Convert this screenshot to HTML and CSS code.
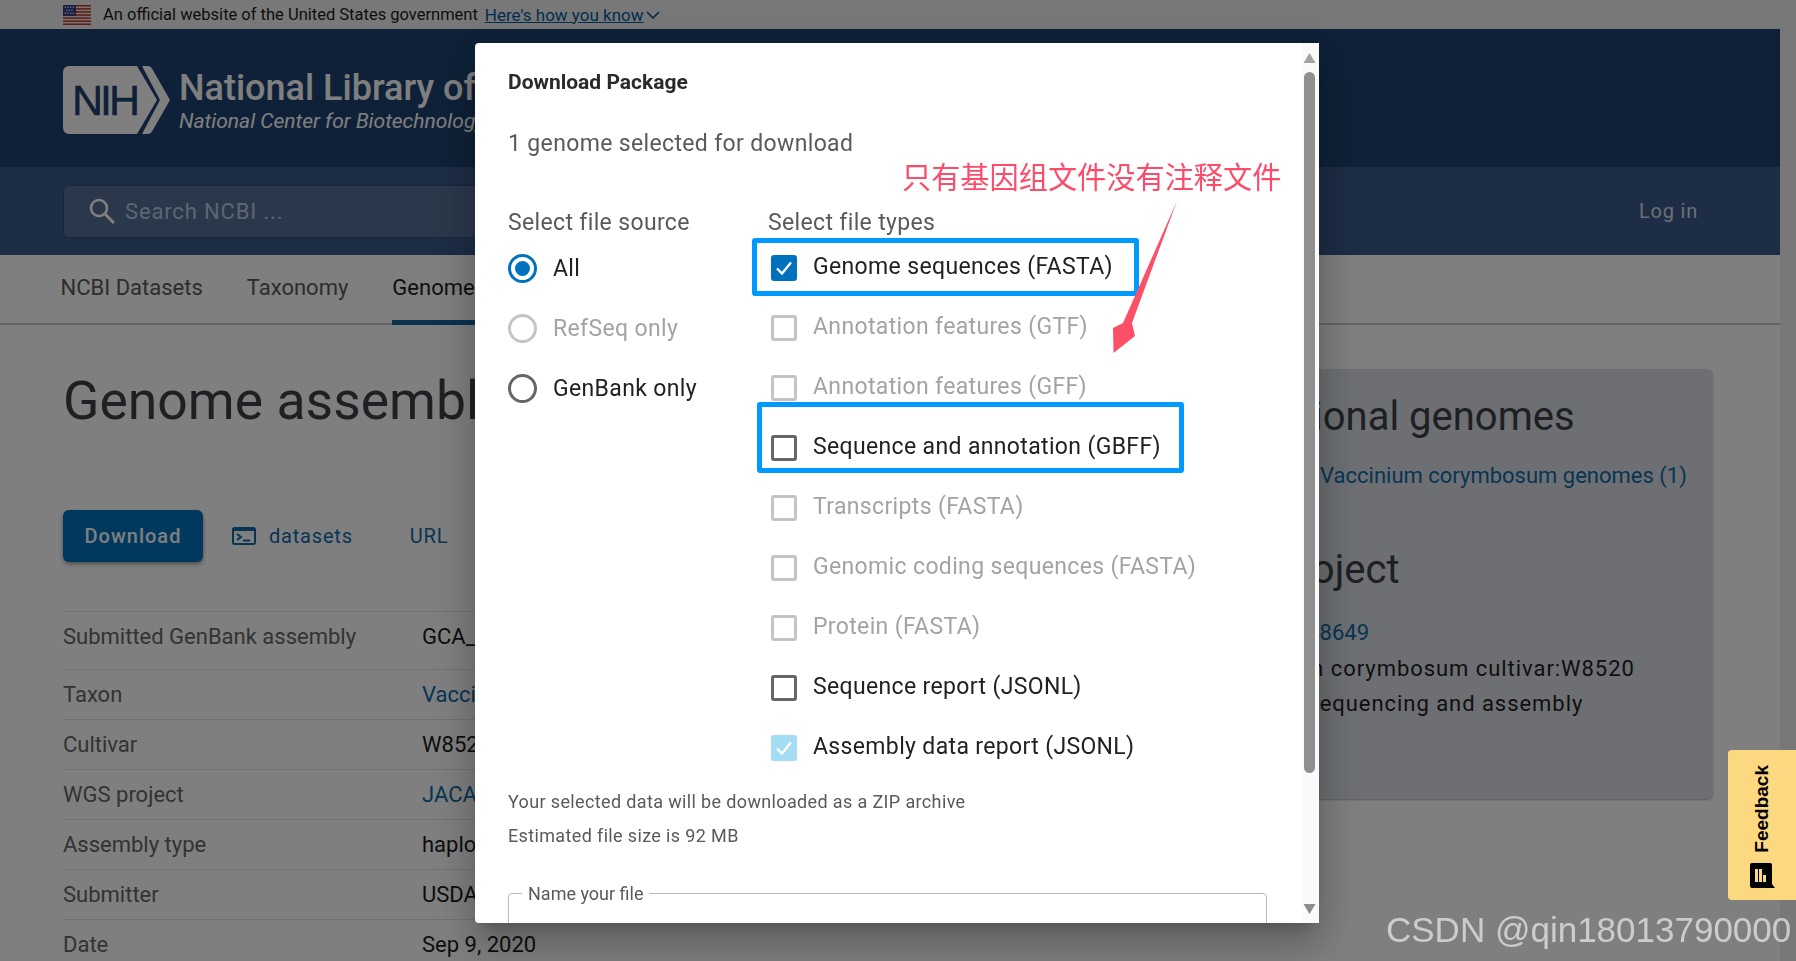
FILE: index.html
```html
<!DOCTYPE html>
<html lang="en">
<head>
<meta charset="utf-8">
<title>Genome assembly - NCBI</title>
<link rel="stylesheet" href="styles.css">
</head>
<body>
<div class="page">
  <div class="gov-banner">
    <svg class="flag" viewBox="0 0 26 20" preserveAspectRatio="none"><rect width="26" height="20" fill="#ececec"/><g fill="#c0392b"><rect width="26" height="1.540"/><rect y="3.080" width="26" height="1.540"/><rect y="6.160" width="26" height="1.540"/><rect y="9.240" width="26" height="1.540"/><rect y="12.320" width="26" height="1.540"/><rect y="15.400" width="26" height="1.540"/><rect y="18.460" width="26" height="1.540"/></g><rect width="12" height="10.800" fill="#2f3a88"/><g fill="#f0f0f0"><rect x="1.500" y="1.500" width="1.300" height="1.300"/><rect x="4" y="1.500" width="1.300" height="1.300"/><rect x="6.500" y="1.500" width="1.300" height="1.300"/><rect x="9" y="1.500" width="1.300" height="1.300"/><rect x="2.700" y="4.500" width="1.300" height="1.300"/><rect x="5.200" y="4.500" width="1.300" height="1.300"/><rect x="7.700" y="4.500" width="1.300" height="1.300"/><rect x="1.500" y="7.500" width="1.300" height="1.300"/><rect x="4" y="7.500" width="1.300" height="1.300"/><rect x="6.500" y="7.500" width="1.300" height="1.300"/><rect x="9" y="7.500" width="1.300" height="1.300"/></g></svg>
    <span class="gov-text">An official website of the United States government</span>
    <a class="gov-link">Here's how you know</a>
    <svg class="gov-chev" viewBox="0 0 14 8"><path d="M1 1l6 6 6-6" fill="none" stroke="#0b4f86" stroke-width="1.600"/></svg>
  </div>
  <header class="masthead">
    <svg class="nih-logo" viewBox="0 0 107 68">
      <path d="M6 0H74L94 34 74 68H6a6 6 0 0 1-6-6V6a6 6 0 0 1 6-6z" fill="#fff"/>
      <path d="M79 0h6a5 5 0 0 1 4 2.500L107 34 89 65.500A5 5 0 0 1 85 68h-6L97 34z" fill="#fff"/>
      <text x="9" y="49" class="nih-text">NIH</text>
    </svg>
    <div class="masthead-title">
      <div class="nlm">National Library of Medicine</div>
      <div class="ncbi">National Center for Biotechnology Information</div>
    </div>
  </header>
  <div class="searchband">
    <div class="searchbox">
      <svg class="search-icon" viewBox="0 0 26 26"><circle cx="10" cy="10" r="8" fill="none" stroke="#fff" stroke-width="2.600"/><path d="M16 16l9 9" stroke="#fff" stroke-width="3"/></svg>
      <span class="placeholder">Search NCBI ...</span>
    </div>
    <a class="login">Log in</a>
  </div>
  <nav class="tabs">
    <a class="tab">NCBI Datasets</a>
    <a class="tab">Taxonomy</a>
    <a class="tab tab-active">Genome</a>
  </nav>
  <main class="content">
    <section class="main-col">
      <h1 class="title">Genome assembly ASM1444434v1</h1>
      <div class="actions">
        <button class="btn-download">Download</button>
        <a class="action-link">
          <svg class="term-icon" viewBox="0 0 24 18"><rect x="1" y="1" width="22" height="16" rx="1.500" fill="none" stroke="#0f6aa8" stroke-width="2"/><rect x="1" y="1" width="22" height="3" fill="#0f6aa8"/><path d="M5 7l4 3-4 3" fill="none" stroke="#0f6aa8" stroke-width="2"/><path d="M11 13.500h7" stroke="#0f6aa8" stroke-width="2"/></svg>
          datasets</a>
        <a class="action-link action-url">URL</a>
      </div>
      <dl class="facts">
        <div class="fact fact-first"><dt>Submitted GenBank assembly</dt><dd>GCA_014444345.1</dd></div>
        <div class="fact"><dt>Taxon</dt><dd class="lnk">Vaccinium corymbosum (highbush blueberry)</dd></div>
        <div class="fact"><dt>Cultivar</dt><dd>W8520</dd></div>
        <div class="fact"><dt>WGS project</dt><dd class="lnk">JACAEA01</dd></div>
        <div class="fact"><dt>Assembly type</dt><dd>haploid</dd></div>
        <div class="fact"><dt>Submitter</dt><dd>USDA ARS</dd></div>
        <div class="fact"><dt>Date</dt><dd>Sep 9, 2020</dd></div>
      </dl>
    </section>
    <aside class="card">
      <h2 class="card-h">Additional genomes</h2>
      <a class="card-link card-all">See more Vaccinium corymbosum genomes (1)</a>
      <h2 class="card-h card-h2">BioProject</h2>
      <a class="card-link card-num">PRJNA648649</a>
      <p class="card-p">Vaccinium corymbosum cultivar:W8520</p>
      <p class="card-p">Genome sequencing and assembly</p>
    </aside>
  </main>
  <div class="scroll-strip"></div>
</div>

<div class="overlay"></div>

<a class="feedback">
  <svg class="fb-icon" viewBox="0 0 25 25"><path d="M2 0h18a2 2 0 0 1 2 2v19l3 4H2a2 2 0 0 1-2-2V2a2 2 0 0 1 2-2z" fill="#000"/><g fill="#fcd881"><rect x="5" y="6" width="3" height="13"/><rect x="9" y="6" width="3" height="13"/><rect x="13" y="12" width="3" height="7"/></g></svg>
  <span class="fb-text">Feedback</span>
</a>

<div class="dialog">
  <div class="dialog-body">
    <h2 class="d-title">Download Package</h2>
    <p class="d-sub">1 genome selected for download</p>
    <div class="d-cols">
      <div class="d-source">
        <div class="d-label">Select file source</div>
        <div class="opt"><span class="radio radio-on"></span>All</div>
        <div class="opt opt-off"><span class="radio"></span>RefSeq only</div>
        <div class="opt"><span class="radio radio-dark"></span>GenBank only</div>
      </div>
      <div class="d-types">
        <div class="d-label">Select file types</div>
        <div class="chk"><span class="box box-on"><svg viewBox="0 0 26 26"><path d="M6 13.500l5 5 9-11" fill="none" stroke="#fff" stroke-width="2.400"/></svg></span>Genome sequences (FASTA)</div>
        <div class="chk chk-off"><span class="box"></span>Annotation features (GTF)</div>
        <div class="chk chk-off"><span class="box"></span>Annotation features (GFF)</div>
        <div class="chk"><span class="box box-dark"></span>Sequence and annotation (GBFF)</div>
        <div class="chk chk-off"><span class="box"></span>Transcripts (FASTA)</div>
        <div class="chk chk-off"><span class="box"></span>Genomic coding sequences (FASTA)</div>
        <div class="chk chk-off"><span class="box"></span>Protein (FASTA)</div>
        <div class="chk"><span class="box box-dark"></span>Sequence report (JSONL)</div>
        <div class="chk"><span class="box box-light"><svg viewBox="0 0 26 26"><path d="M6 13.500l5 5 9-11" fill="none" stroke="#fff" stroke-width="2.400"/></svg></span>Assembly data report (JSONL)</div>
      </div>
    </div>
    <p class="d-note d-note1">Your selected data will be downloaded as a ZIP archive</p>
    <p class="d-note">Estimated file size is 92 MB</p>
    <fieldset class="namefield"><legend>Name your file</legend></fieldset>
  </div>
  <div class="d-scroll">
    <svg class="arrow-btn" viewBox="0 0 12 10"><path d="M6 0l6 10H0z" fill="#a3a3a3"/></svg>
    <div class="d-track"><div class="d-thumb"></div></div>
    <svg class="arrow-btn" viewBox="0 0 12 10"><path d="M6 10l6-10H0z" fill="#8c8c8c"/></svg>
  </div>
</div>

<div class="mark mark-a"></div>
<div class="mark mark-b"></div>
<div class="note-cn">只有基因组文件没有注释文件</div>
<svg class="note-arrow" viewBox="0 0 70 158"><path d="M67 3L22 125 25 138 3.500 155 3 130 13 125z" fill="#fb5068"/></svg>
<div class="watermark">CSDN @qin18013790000</div>
</body>
</html>
```
FILE: styles.css
```css
* { box-sizing: border-box; }
html, body { margin: 0; height: 100%; overflow: hidden; }
body { font-family: Roboto, "Liberation Sans", sans-serif; color: #212121; background: #fff; }

.page { position: relative; height: 961px; overflow: hidden; }
.gov-banner { height: 29px; background: #f0f0f0; display: flex; align-items: center; padding-left: 63px; font-size: 16.500px; }
.flag { width: 28px; height: 20px; margin-right: 12px; }
.gov-text { color: #1b1b1b; }
.gov-link { color: #005ea2; text-decoration: underline; margin-left: 7px; font-size: 17px; }
.gov-chev { width: 14px; height: 8px; margin-left: 2px; }

.masthead { height: 138px; background: #1d4370; display: flex; align-items: flex-start; padding: 37px 0 0 63px; }
.nih-logo { width: 107px; height: 68px; flex: none; }
.nih-text { font-family: "Liberation Sans", sans-serif; font-size: 43px; fill: #1d4370; stroke: #1d4370; stroke-width: .5; letter-spacing: -3px; }
.masthead-title { margin-left: 9px; color: #fff; }
.nlm { font-size: 36px; font-weight: 500; line-height: 44px; white-space: nowrap; }
.ncbi { font-size: 21px; line-height: 22px; font-style: italic; white-space: nowrap; }

.searchband { height: 88px; background: #3a5a8a; display: flex; align-items: center; padding: 0 98px 0 63px; justify-content: space-between; }
.searchbox { width: 1000px; height: 53px; background: #567096; border-radius: 6px; border: 1px solid #2f4f7a; display: flex; align-items: center; padding-left: 25px; }
.search-icon { width: 26px; height: 26px; margin-right: 10px; }
.placeholder { color: #b4cfe8; font-size: 22px; letter-spacing: .85px; }
.login { color: #fff; font-size: 20px; letter-spacing: .8px; opacity: .8; }

.tabs { height: 70px; background: #fff; display: flex; gap: 44px; padding-left: 60.500px; border-bottom: 2px solid #c8c8c8; }
.tab { font-size: 22px; color: #5a5a5a; padding-top: 20px; height: 70px; }
.tab-active { color: #212121; border-bottom: 5px solid #14649f; width: 140px; }

.content { display: flex; padding: 43px 0 0 63px; }
.main-col { width: 1129px; flex: none; }
.title { font-size: 53.500px; font-weight: 400; line-height: 66px; margin: 0; white-space: nowrap; color: #3c4147; }
.actions { display: flex; align-items: center; margin-top: 76px; height: 52px; }
.btn-download { width: 140px; height: 52px; background: #0071bc; color: #fff; border: 0; border-radius: 6px; font: 500 20px Roboto, sans-serif; letter-spacing: 1px; box-shadow: 0 2px 4px rgba(0,0,0,.4); }
.action-link { color: #0f6aa8; font-size: 20px; letter-spacing: .8px; display: flex; align-items: center; }
.term-icon { width: 24px; height: 18px; margin: 0 13px 0 29px; }
.action-url { margin-left: 57px; }
.facts { margin: 49px 0 0; }
.fact { display: flex; height: 50px; align-items: center; border-top: 1px solid #e3e3e3; font-size: 22px; white-space: nowrap; }
.fact-first { height: 58px; padding-bottom: 8px; }
.fact dt { width: 359px; color: #666; }
.fact dd { margin: 0; color: #1a1a1a; }
.fact .lnk { color: #0f6aa8; }

.card { width: 521px; height: 430px; background: #dadfe6; border-radius: 6px; flex: none; margin-top: 1px; padding: 24px 0 0 21px; box-shadow: 0 1px 2px rgba(0,0,0,.3); }
.card-h { font-size: 40px; font-weight: 400; margin: 0 0 0 6px; line-height: 48px; white-space: nowrap; color: #3c4147; }
.card-h2 { margin: 58px 0 0 3px; }
.card-link { color: #0f6aa8; font-size: 22px; display: block; white-space: nowrap; }
.card-all { margin: 22px 0 0 9px; }
.card-num { margin: 26px 0 0 12px; }
.card-p { font-size: 22px; letter-spacing: .95px; margin: 10px 0 0; white-space: nowrap; }
.card-num + .card-p { margin-top: 11px; }
.scroll-strip { position: absolute; top: 29px; right: 0; bottom: 0; width: 16px; background: #f0f0f0; }

.overlay { position: fixed; inset: 0; background: rgba(0,0,0,.5); }

.feedback { position: fixed; left: 1728px; top: 750px; width: 68px; height: 150px; background: #fcd881; border-radius: 4px 0 0 4px; display: flex; flex-direction: column-reverse; align-items: center; justify-content: flex-start; padding: 12px 0; }
.fb-text { writing-mode: vertical-rl; transform: rotate(180deg); font: 700 19px "Liberation Sans", sans-serif; color: #000; }
.fb-icon { width: 25px; height: 25px; margin-top: 10px; flex: none; }

.dialog { position: fixed; left: 475px; top: 43px; width: 844px; height: 880px; background: #fff; border-radius: 4px 0 0 4px; display: flex; box-shadow: 0 11px 15px -7px rgba(0,0,0,.2), 0 24px 38px 3px rgba(0,0,0,.14), 0 9px 46px 8px rgba(0,0,0,.12); overflow: hidden; }
.dialog-body { flex: 1; padding: 27px 0 0 33px; overflow: hidden; }
.d-title { font-size: 21px; font-weight: 700; margin: 0; line-height: 24px; color: #2a2a2a; }
.d-sub { margin: 36px 0 0; font-size: 23px; letter-spacing: .35px; line-height: 28px; color: #5a5a5a; }
.d-cols { display: flex; margin-top: 51px; }
.d-source { width: 260px; }
.d-label { font-size: 23px; letter-spacing: .35px; line-height: 28px; color: #5a5a5a; margin-bottom: -1px; }
.d-source .d-label { margin-bottom: 1px; }
.opt { height: 60px; display: flex; align-items: center; font-size: 23px; letter-spacing: .35px; color: #212121; white-space: nowrap; }
.opt-off { color: #a3a3a3; }
.radio { width: 29px; height: 29px; border: 3px solid #666; border-radius: 50%; margin-right: 16px; flex: none; display: flex; align-items: center; justify-content: center; }
.opt-off .radio { border-color: #c4c4c4; }
.radio-on { border-color: #0071bc; }
.radio-on::after { content: ""; width: 15px; height: 15px; border-radius: 50%; background: #0071bc; }
.chk { height: 60px; display: flex; align-items: center; font-size: 23px; letter-spacing: .35px; color: #212121; padding-left: 3px; white-space: nowrap; }
.chk-off { color: #a3a3a3; }
.box { width: 26px; height: 26px; margin-top: 3px; border: 3px solid #c4c4c4; border-radius: 3px; margin-right: 16px; flex: none; position: relative; }
.box svg { display: block; width: 26px; height: 26px; position: absolute; left: -3px; top: -3px; }
.box-dark { border-color: #666; }
.box-on { border-color: #0071bc; background: #0071bc; }
.box-light { border-color: #a3dcf3; background: #a3dcf3; }
.d-note { font-size: 18px; letter-spacing: .36px; line-height: 24px; margin: 10px 0 0; color: #5a5a5a; }
.d-note1 { margin-top: 13.500px; }
.namefield { margin: 36px 0 0; width: 759px; height: 80px; border: 1px solid #bbb; border-radius: 4px; padding: 0 0 0 13px; }
.namefield legend { font-size: 18px; color: #5a5a5a; padding: 0 6px; line-height: 20px; }

.d-scroll { width: 17px; flex: none; background: #fafafa; display: flex; flex-direction: column; align-items: center; padding: 10px 2px 9px 0; }
.arrow-btn { width: 13px; height: 10px; flex: none; }
.d-track { flex: 1; width: 100%; padding: 9px 2px; }
.d-thumb { height: 701px; background: #8f8f8f; border-radius: 6px; }

.mark { position: fixed; border: 5px solid #0099ff; border-radius: 3px; }
.mark-a { left: 752px; top: 238px; width: 387px; height: 58px; }
.mark-b { left: 757px; top: 402px; width: 427px; height: 71px; }
.note-cn { position: fixed; left: 902px; top: 156px; font: 400 29.200px/38px "Noto Sans CJK SC", "Liberation Sans", sans-serif; color: #fb4d6b; white-space: nowrap; }
.note-arrow { position: fixed; left: 1110px; top: 198px; width: 70px; height: 158px; }
.watermark { position: fixed; left: 1386px; top: 910px; font: 35px/40px "Liberation Sans", sans-serif; color: rgba(255,255,255,.6); white-space: nowrap; }
```
